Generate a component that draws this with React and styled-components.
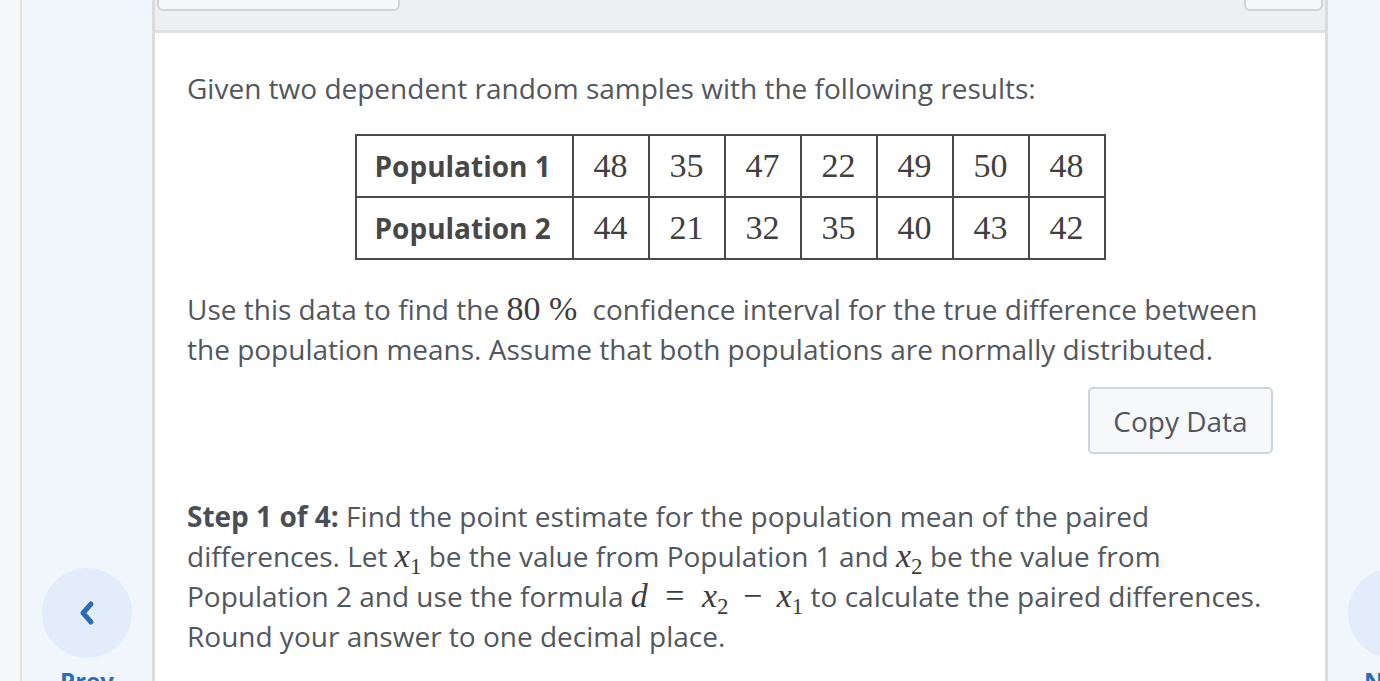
import React from "react";
import styled, { createGlobalStyle } from "styled-components";

const GlobalStyle = createGlobalStyle`
  html, body {
    margin: 0;
    padding: 0;
    overflow: hidden;
    background: #ffffff;
  }
  body {
    font-family: "Open Sans", "Liberation Sans", sans-serif;
  }
`;

const Page = styled.div`
  display: flex;
  width: 1380px;
  height: 681px;
  overflow: hidden;
`;

const Edge = styled.div`
  flex: 0 0 20px;
  background: #f5f6f7;
  border-right: 2px solid #e1e2e3;
`;

const Side = styled.div`
  flex: 0 0 133px;
  background: #f1f6fd;
  display: flex;
  flex-direction: column;
  align-items: center;
  padding-top: 568px;
  box-sizing: border-box;
  border-left: ${p => (p.$right ? "3px solid #dcdcdc" : "none")};
  border-right: ${p => (p.$right ? "none" : "3px solid #dcdcdc")};
`;

const NavCircle = styled.div`
  width: 90px;
  height: 90px;
  border-radius: 50%;
  background: #e2ecfa;
  display: flex;
  align-items: center;
  justify-content: center;
  flex-shrink: 0;
`;

const NavLabel = styled.div`
  margin-top: 6px;
  font-size: 24px;
  font-weight: 700;
  color: #2c6cb4;
`;

const Main = styled.div`
  flex: 0 0 1170px;
  display: flex;
  flex-direction: column;
`;

const Toolbar = styled.div`
  height: 33px;
  box-sizing: border-box;
  background: #eeeff1;
  border-bottom: 3px solid #dfe0e1;
  display: flex;
  justify-content: space-between;
  align-items: flex-end;
  padding: 0 2px 19px 2px;
  overflow: hidden;
`;

const ToolButton = styled.div`
  width: ${p => p.$w}px;
  height: 40px;
  flex-shrink: 0;
  background: #f5f7f9;
  border: 2px solid #cbd5dd;
  border-radius: 6px;
  box-sizing: border-box;
`;

const Card = styled.div`
  flex: 1;
  background: #ffffff;
  padding: 35px 52px 0 32px;
  color: #52575d;
  font-size: 28px;
  line-height: 40px;
`;

const Para = styled.p`
  margin: 0;
`;

const Table = styled.table`
  border-collapse: collapse;
  margin: 26px auto 29px auto;
`;

const HeadCell = styled.th`
  border: 2px solid #4a4a4a;
  width: 217px;
  height: 62px;
  box-sizing: border-box;
  padding: 0 18px;
  text-align: left;
  font-family: "Open Sans", "Liberation Sans", sans-serif;
  font-weight: 700;
  font-size: 28px;
  color: #474747;
  white-space: nowrap;
`;

const NumCell = styled.td`
  border: 2px solid #4a4a4a;
  width: 76px;
  height: 62px;
  box-sizing: border-box;
  text-align: center;
  font-family: "Liberation Serif", "DejaVu Serif", serif;
  font-size: 34px;
  color: #404040;
`;

const Mathy = styled.span`
  font-family: "Liberation Serif", "DejaVu Serif", serif;
  font-size: 34px;
  color: #3d3d3d;
  font-style: ${p => (p.$italic ? "italic" : "normal")};
  margin: ${p => p.$m || "0"};
`;

const Sub = styled.sub`
  font-size: 23px;
  line-height: 0;
  vertical-align: -7px;
  font-style: normal;
`;

const ButtonRow = styled.div`
  display: flex;
  justify-content: flex-end;
  margin: 18px 0 42px 0;
`;

const CopyButton = styled.button`
  width: 185px;
  height: 67px;
  background: #f7f8fa;
  border: 2px solid #cdd6de;
  border-radius: 5px;
  font-family: "Open Sans", "Liberation Sans", sans-serif;
  font-size: 28px;
  color: #52575d;
  cursor: pointer;
`;

const Bold = styled.b`
  font-weight: 700;
  color: #4a4f55;
`;

const Chevron = ({ dir }) => (
  <svg width="20" height="28" viewBox="0 0 20 28">
    <polyline
      points={dir === "left" ? "14,5 6,14 14,23" : "6,5 14,14 6,23"}
      fill="none"
      stroke="#2c6cb4"
      strokeWidth="5"
      strokeLinecap="round"
      strokeLinejoin="round"
    />
  </svg>
);

const pop1 = [48, 35, 47, 22, 49, 50, 48];
const pop2 = [44, 21, 32, 35, 40, 43, 42];

const X = ({ n }) => (
  <Mathy $italic>
    x<Sub>{n}</Sub>
  </Mathy>
);

export default function App() {
  return (
    <>
      <GlobalStyle />
      <Page>
        <Edge />
        <Side>
          <NavCircle>
            <Chevron dir="left" />
          </NavCircle>
          <NavLabel>Prev</NavLabel>
        </Side>
        <Main>
          <Toolbar>
            <ToolButton $w={243} />
            <ToolButton $w={79} />
          </Toolbar>
          <Card>
            <Para>Given two dependent random samples with the following results:</Para>
            <Table>
              <tbody>
                <tr>
                  <HeadCell>Population 1</HeadCell>
                  {pop1.map((v, i) => (
                    <NumCell key={i}>{v}</NumCell>
                  ))}
                </tr>
                <tr>
                  <HeadCell>Population 2</HeadCell>
                  {pop2.map((v, i) => (
                    <NumCell key={i}>{v}</NumCell>
                  ))}
                </tr>
              </tbody>
            </Table>
            <Para>
              Use this data to find the <Mathy $m="0 8px 0 0">80 %</Mathy> confidence interval for the true difference between
              the population means. Assume that both populations are normally distributed.
            </Para>
            <ButtonRow>
              <CopyButton>Copy Data</CopyButton>
            </ButtonRow>
            <Para>
              <Bold>Step 1 of 4:</Bold> Find the point estimate for the population mean of the paired
              differences. Let <X n={1} /> be the value from Population 1 and <X n={2} /> be the value from
              Population 2 and use the formula <Mathy $italic>d</Mathy>
              <Mathy $m="0 9px"> = </Mathy>
              <X n={2} />
              <Mathy $m="0 6px"> − </Mathy>
              <X n={1} /> to calculate the paired differences. Round your answer to one decimal place.
            </Para>
          </Card>
        </Main>
        <Side $right>
          <NavCircle>
            <Chevron dir="right" />
          </NavCircle>
          <NavLabel>Next</NavLabel>
        </Side>
      </Page>
    </>
  );
}
